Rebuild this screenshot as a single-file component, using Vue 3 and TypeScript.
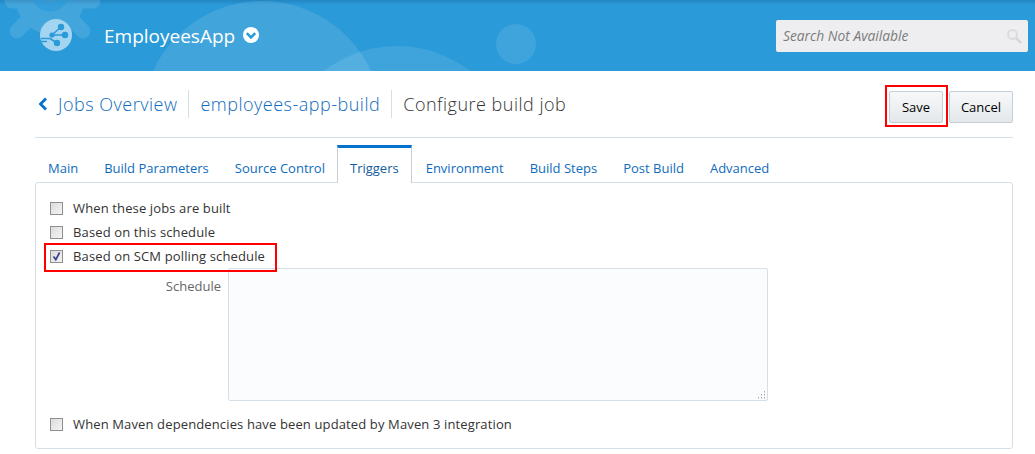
<script setup lang="ts">
const tabs = ['Main', 'Build Parameters', 'Source Control', 'Triggers', 'Environment', 'Build Steps', 'Post Build', 'Advanced']
</script>

<template>
  <div class="page">
    <header class="banner">
      <svg class="art" width="1035" height="71" viewBox="0 0 1035 71">
        <circle cx="262" cy="121" r="120" fill="#fff" fill-opacity=".11" />
        <circle cx="397" cy="166" r="120" fill="#fff" fill-opacity=".1" />
        <circle cx="516" cy="44" r="20" fill="#fff" fill-opacity=".1" />
        <g opacity=".11" fill="#fff" stroke="#fff" stroke-linecap="round" stroke-width="15">
          <circle cx="50" cy="0" r="34" stroke="none" />
          <path d="M17 31 30 18M83 31 70 18M56 42V20M12 1H40M93 1H60" />
        </g>
        <circle cx="50" cy="-8" r="15" fill="none" stroke="#2a9ad8" stroke-opacity=".6" stroke-width="9" />
        <circle cx="56" cy="35" r="16" fill="#a3d5f0" />
        <g stroke="#2a9ad8" stroke-width="1.500" fill="none">
          <path d="M52 35h13M52 35l9-8M41 38.500h9l7 4.500M41 41.500h6" />
        </g>
        <g fill="#2a9ad8">
          <circle cx="61" cy="27" r="3.200" />
          <circle cx="65" cy="35" r="3.200" />
          <circle cx="57" cy="43" r="3.200" />
          <circle cx="52" cy="35" r="2.600" />
        </g>
      </svg>
      <div class="brand">
        <span class="app">EmployeesApp</span>
        <svg class="chev" width="16" height="16" viewBox="0 0 16 16">
          <circle cx="8" cy="8" r="8" fill="#fff" />
          <path d="M3.800 6.200 8 10.400l4.200-4.200" fill="none" stroke="#2a9ad8" stroke-width="2.600" />
        </svg>
      </div>
      <div class="search">
        <span>Search Not Available</span>
        <svg width="16" height="16" viewBox="0 0 16 16">
          <circle cx="6.500" cy="6.500" r="4.500" fill="none" stroke="#dcdcdc" stroke-width="2" />
          <path d="M10 10l5 5" stroke="#d4d4d4" stroke-width="2.400" />
        </svg>
      </div>
    </header>

    <main class="content">
      <div class="title-row">
        <div class="crumbs">
          <a class="crumb back">
            <svg width="10" height="14" viewBox="0 0 10 14">
              <path d="M8 1.500 2.500 7 8 12.500" fill="none" stroke="#0572ce" stroke-width="2.800" />
            </svg>
            Jobs Overview
          </a>
          <a class="crumb">employees-app-build</a>
          <span class="crumb current">Configure build job</span>
        </div>
        <div class="actions">
          <button class="btn save"><span class="btn-label">Save</span><span class="hl-save"></span></button>
          <button class="btn cancel"><span class="btn-label">Cancel</span></button>
        </div>
      </div>

      <nav class="tabs">
        <a v-for="t in tabs" :key="t" class="tab" :class="{ active: t === 'Triggers' }">{{ t }}</a>
      </nav>

      <section class="panel">
        <label class="check"><span class="box"></span>When these jobs are built</label>
        <label class="check"><span class="box"></span>Based on this schedule</label>
        <label class="check marked">
          <span class="box">
            <svg width="11" height="11" viewBox="0 0 11 11"><path d="M2.500 5.500 4.800 8.600 8.600 1.500" fill="none" stroke="#3c3f8f" stroke-width="1.700" /></svg>
          </span>
          Based on SCM polling schedule
          <span class="hl-row"></span>
        </label>
        <div class="schedule">
          <span class="field-label">Schedule</span>
          <div class="area">
            <svg class="grip" width="9" height="9" viewBox="0 0 9 9" fill="#a9a9a9">
              <rect x="7" y="1" width="1" height="1.500" /><rect x="7" y="4" width="1" height="1.500" /><rect x="7" y="7" width="1" height="1.500" />
              <rect x="4" y="4" width="1" height="1.500" /><rect x="4" y="7" width="1" height="1.500" /><rect x="1" y="7" width="1" height="1.500" />
            </svg>
          </div>
        </div>
        <label class="check"><span class="box"></span>When Maven dependencies have been updated by Maven 3 integration</label>
      </section>
    </main>
  </div>
</template>

<style>
html, body { margin: 0; background: #fff; }
</style>

<style scoped>
.page {
  width: 1035px;
  height: 454px;
  overflow: hidden;
  font-family: "Open Sans", "Noto Sans", sans-serif;
  color: #333;
}
.banner {
  position: relative;
  height: 71px;
  background: linear-gradient(#2286c2, #2a9ad8 5px);
  display: flex;
  align-items: center;
  justify-content: space-between;
  padding: 0 7px 0 104px;
  box-sizing: border-box;
  overflow: hidden;
}
.art { position: absolute; left: 0; top: 0; }
.brand { position: relative; display: flex; align-items: center; gap: 8px; }
.app { color: #fff; font-size: 19px; }
.chev { display: block; margin-top: -1px; }
.search {
  position: relative;
  width: 252px;
  height: 32px;
  background: #eeeef0;
  border-radius: 2px;
  display: flex;
  align-items: center;
  justify-content: space-between;
  padding: 0 6px 0 7px;
  box-sizing: border-box;
  font-size: 13.8px;
  font-style: italic;
  color: #7c7c7c;
}
.content { padding: 0 22px 0 35px; }
.title-row {
  display: flex;
  justify-content: space-between;
  align-items: center;
  height: 66px;
  border-bottom: 1px solid #d6dfe6;
}
.crumbs { display: flex; align-items: center; }
.crumb {
  font-size: 18px;
  font-weight: 300;
  letter-spacing: .5px;
  color: #0f6cbd;
  padding: 0 11px;
  height: 28px;
  line-height: 28px;
  border-right: 1px solid #d6dfe6;
  display: flex;
  align-items: center;
}
.back { padding-left: 3px; gap: 10px; }
.current { color: #333; border-right: 0; }
.actions { display: flex; align-items: center; gap: 6px; margin-top: 5px; }
.btn {
  position: relative;
  height: 32px;
  padding: 0;
  border: 1px solid #c4ced7;
  border-radius: 2px;
  background: linear-gradient(#f7f8f9, #e4e8ea);
  font: 13px "Open Sans", sans-serif;
  color: #000;
}
.btn-label { display: block; margin-top: 1px; }
.save { width: 54px; }
.cancel { width: 64px; }
.hl-save {
  position: absolute;
  left: -5px;
  top: -7px;
  width: 63px;
  height: 42px;
  box-sizing: border-box;
  border: 2px solid #f00;
}
.tabs {
  display: flex;
  height: 44px;
  align-items: flex-end;
}
.tab {
  font-size: 13px;
  color: #0f6cbd;
  padding: 0 13px;
  height: 31px;
  line-height: 34px;
  box-sizing: border-box;
  white-space: nowrap;
}
.tab.active {
  color: #145c9e;
  height: 38px;
  line-height: 40px;
  border: 1px solid #c4ced7;
  border-top: 3px solid #0572ce;
  border-bottom: 0;
  background: #fff;
  margin-bottom: -1px;
  margin-left: -1px;
  margin-right: 1px;
  position: relative;
  z-index: 1;
  padding: 0 12px;
}
.panel {
  border: 1px solid #d6dfe6;
  border-radius: 3px;
  height: 267px;
  box-sizing: border-box;
  padding: 13px 14px 0;
}
.check {
  position: relative;
  display: flex;
  align-items: center;
  height: 24px;
  font-size: 13px;
  letter-spacing: .13px;
  color: #333;
  white-space: nowrap;
}
.box {
  width: 11px;
  height: 11px;
  border: 1px solid #8f8f8f;
  background: linear-gradient(135deg, #dcdcdc, #f4f4f4);
  margin-right: 10px;
  display: flex;
  flex: none;
}
.hl-row {
  position: absolute;
  z-index: 2;
  left: -6px;
  top: -1px;
  width: 233px;
  height: 29px;
  box-sizing: border-box;
  border: 2px solid #f00;
}
.schedule { display: flex; align-items: flex-start; margin-bottom: 11px; }
.field-label {
  width: 171px;
  text-align: right;
  font-size: 13px;
  color: #666;
  line-height: 36px;
  margin-right: 7px;
  flex: none;
}
.area {
  position: relative;
  width: 540px;
  height: 133px;
  box-sizing: border-box;
  border: 1px solid #d6dfe6;
  border-radius: 2px;
  background: #fbfcfe;
}
.grip { position: absolute; right: 1px; bottom: 1px; }
</style>
